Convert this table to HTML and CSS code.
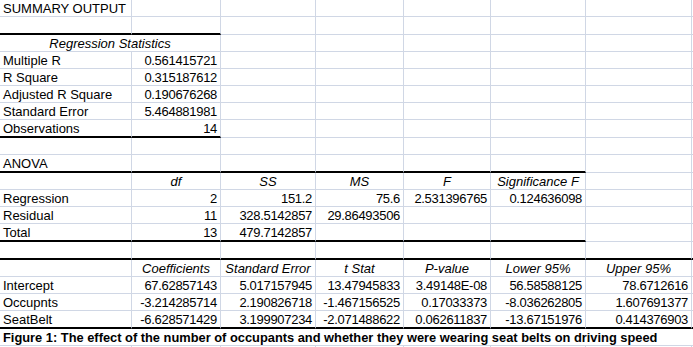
FILE: index.html
```html
<!DOCTYPE html>
<html>
<head>
<meta charset="utf-8">
<title>Summary Output</title>
<link rel="stylesheet" href="styles.css">
</head>
<body>
<div class="sheet">
  <!-- r1 -->
  <div class="c">SUMMARY OUTPUT</div><div class="c"></div><div class="c"></div><div class="c"></div><div class="c"></div><div class="c"></div><div class="c"></div><div class="c end"></div>
  <!-- r2 -->
  <div class="c tb"></div><div class="c tb"></div><div class="c"></div><div class="c"></div><div class="c"></div><div class="c"></div><div class="c"></div><div class="c end"></div>
  <!-- r3 -->
  <div class="c hd span2">Regression Statistics</div><div class="c"></div><div class="c"></div><div class="c"></div><div class="c"></div><div class="c"></div><div class="c end"></div>
  <!-- r4 -->
  <div class="c">Multiple R</div><div class="c num">0.561415721</div><div class="c"></div><div class="c"></div><div class="c"></div><div class="c"></div><div class="c"></div><div class="c end"></div>
  <!-- r5 -->
  <div class="c">R Square</div><div class="c num">0.315187612</div><div class="c"></div><div class="c"></div><div class="c"></div><div class="c"></div><div class="c"></div><div class="c end"></div>
  <!-- r6 -->
  <div class="c">Adjusted R Square</div><div class="c num">0.190676268</div><div class="c"></div><div class="c"></div><div class="c"></div><div class="c"></div><div class="c"></div><div class="c end"></div>
  <!-- r7 -->
  <div class="c">Standard Error</div><div class="c num">5.464881981</div><div class="c"></div><div class="c"></div><div class="c"></div><div class="c"></div><div class="c"></div><div class="c end"></div>
  <!-- r8 -->
  <div class="c tb">Observations</div><div class="c num tb">14</div><div class="c"></div><div class="c"></div><div class="c"></div><div class="c"></div><div class="c"></div><div class="c end"></div>
  <!-- r9 -->
  <div class="c"></div><div class="c"></div><div class="c"></div><div class="c"></div><div class="c"></div><div class="c"></div><div class="c"></div><div class="c end"></div>
  <!-- r10 -->
  <div class="c tb">ANOVA</div><div class="c tb"></div><div class="c tb"></div><div class="c tb"></div><div class="c tb"></div><div class="c tb"></div><div class="c"></div><div class="c end"></div>
  <!-- r11 -->
  <div class="c"></div><div class="c hd">df</div><div class="c hd">SS</div><div class="c hd">MS</div><div class="c hd">F</div><div class="c hd">Significance F</div><div class="c"></div><div class="c end"></div>
  <!-- r12 -->
  <div class="c">Regression</div><div class="c num">2</div><div class="c num">151.2</div><div class="c num">75.6</div><div class="c num">2.531396765</div><div class="c num">0.124636098</div><div class="c"></div><div class="c end"></div>
  <!-- r13 -->
  <div class="c">Residual</div><div class="c num">11</div><div class="c num">328.5142857</div><div class="c num">29.86493506</div><div class="c"></div><div class="c"></div><div class="c"></div><div class="c end"></div>
  <!-- r14 -->
  <div class="c tb">Total</div><div class="c num tb">13</div><div class="c num tb">479.7142857</div><div class="c tb"></div><div class="c tb"></div><div class="c tb"></div><div class="c"></div><div class="c end"></div>
  <!-- r15 -->
  <div class="c tb"></div><div class="c tb"></div><div class="c tb"></div><div class="c tb"></div><div class="c tb"></div><div class="c tb"></div><div class="c tb"></div><div class="c end tb"></div>
  <!-- r16 -->
  <div class="c"></div><div class="c hd">Coefficients</div><div class="c hd">Standard Error</div><div class="c hd">t Stat</div><div class="c hd">P-value</div><div class="c hd">Lower 95%</div><div class="c hd">Upper 95%</div><div class="c end"></div>
  <!-- r17 -->
  <div class="c">Intercept</div><div class="c num">67.62857143</div><div class="c num">5.017157945</div><div class="c num">13.47945833</div><div class="c num">3.49148E-08</div><div class="c num">56.58588125</div><div class="c num">78.6712616</div><div class="c end"></div>
  <!-- r18 -->
  <div class="c">Occupnts</div><div class="c num">-3.214285714</div><div class="c num">2.190826718</div><div class="c num">-1.467156525</div><div class="c num">0.17033373</div><div class="c num">-8.036262805</div><div class="c num">1.607691377</div><div class="c end"></div>
  <!-- r19 -->
  <div class="c tb">SeatBelt</div><div class="c num tb">-6.628571429</div><div class="c num tb">3.199907234</div><div class="c num tb">-2.071488622</div><div class="c num tb">0.062611837</div><div class="c num tb">-13.67151976</div><div class="c num tb">0.414376903</div><div class="c end tb"></div>
  <!-- r20 -->
  <div class="c caption span-all">Figure 1: The effect of the number of occupants and whether they were wearing seat belts on driving speed</div>
  <!-- r21 -->
  <div class="c"></div><div class="c"></div><div class="c"></div><div class="c"></div><div class="c"></div><div class="c"></div><div class="c"></div><div class="c end"></div>
</div>
</body>
</html>
```
FILE: styles.css
```css
html, body {
  margin: 0;
  padding: 0;
  background: #ffffff;
  overflow: hidden;
}

.sheet {
  display: grid;
  grid-template-columns: 132px 89px 95px 88px 87px 95px 106px 1fr;
  grid-template-rows: 17px 18px 17px 17px 17px 17px 17px 18px 17px 18px 17px 17px 17px 18px 18px 17px 17px 17px 18px 17px 17px;
  width: 693px;
  font-family: "Liberation Sans", Arial, sans-serif;
  font-size: 13px;
  color: #000000;
}

.c {
  box-sizing: border-box;
  border-right: 1px solid #d0d7e5;
  border-bottom: 1px solid #d0d7e5;
  padding: 1px 3px 0 3px;
  line-height: 16px;
  white-space: nowrap;
  overflow: hidden;
}

.c.end {
  border-right: none;
}

.num {
  text-align: right;
  letter-spacing: -0.3px;
}

.hd {
  font-style: italic;
  text-align: center;
}

.tb {
  border-bottom: 2px solid #000000;
}

.span2 {
  grid-column: span 2;
}

.span-all {
  grid-column: 1 / -1;
  border-right: none;
}

.caption {
  font-weight: bold;
  font-size: 12.85px;
  overflow: visible;
}
```
